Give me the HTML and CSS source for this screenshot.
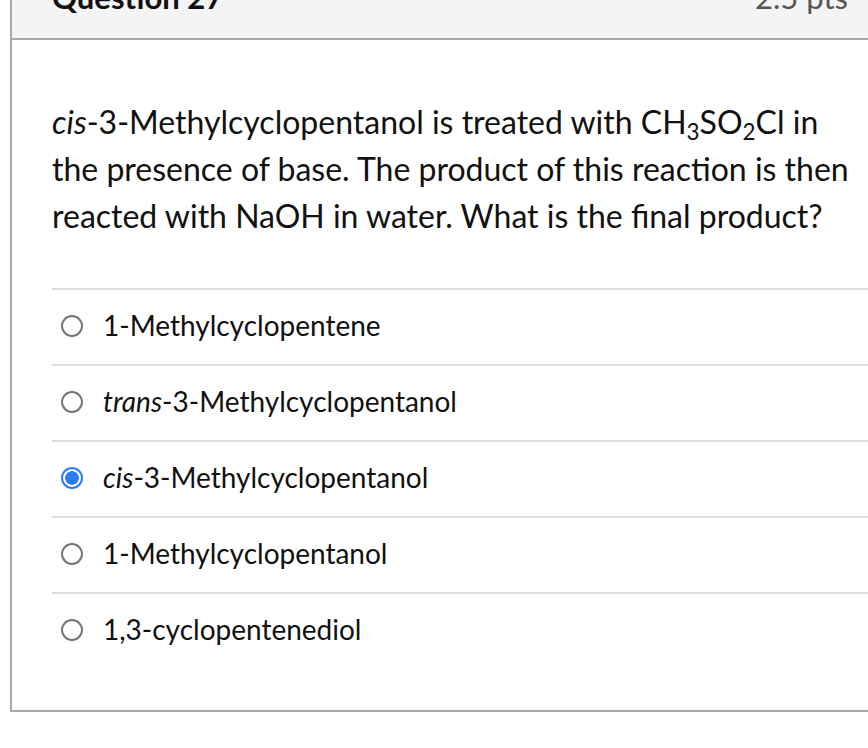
FILE: index.html
```html
<!DOCTYPE html>
<html lang="en">
<head>
<meta charset="utf-8">
<title>Question 27</title>
<link rel="stylesheet" href="styles.css">
</head>
<body>
<div class="card">
  <div class="card-header">
    <span class="q-title">Question 27</span>
    <span class="q-pts">2.5 pts</span>
  </div>
  <div class="card-body">
    <p class="q-text"><em>cis</em>-3-Methylcyclopentanol is treated with CH<sub>3</sub>SO<sub>2</sub>Cl in the presence of base. The product of this reaction is then reacted with NaOH in water. What is the final product?</p>
    <div class="answers">
      <div class="answer"><span class="radio"></span><span class="label">1-Methylcyclopentene</span></div>
      <div class="answer"><span class="radio"></span><span class="label"><em>trans</em>-3-Methylcyclopentanol</span></div>
      <div class="answer"><span class="radio checked"></span><span class="label"><em>cis</em>-3-Methylcyclopentanol</span></div>
      <div class="answer"><span class="radio"></span><span class="label">1-Methylcyclopentanol</span></div>
      <div class="answer"><span class="radio"></span><span class="label">1,3-cyclopentenediol</span></div>
    </div>
  </div>
</div>
</body>
</html>
```

FILE: styles.css
```css
html, body {
  margin: 0;
  padding: 0;
  background: #fff;
}
body {
  font-family: Lato, "Liberation Sans", sans-serif;
  color: #111;
  overflow: hidden;
}
.card {
  margin: -20px -20px 0 10px;
  border: 2px solid #a9a9a9;
  background: #fff;
}
.card-header {
  background: #f4f4f4;
  border-bottom: 2px solid #a9a9a9;
  display: flex;
  justify-content: space-between;
  align-items: flex-start;
  padding: 0 38px 0 40px;
  line-height: 1;
  box-sizing: border-box;
  height: 58px;
}
.q-title {
  font-size: 31px;
  font-weight: 700;
  color: #111;
}
.q-pts {
  font-size: 31px;
  color: #555;
}
.card-body {
  padding: 58px 18px 42px 40px;
}
.q-text {
  margin: 0 0 49px;
  font-size: 32px;
  line-height: 47px;
}
.q-text sub {
  font-size: 0.7em;
  line-height: 0;
  vertical-align: -0.25em;
}
.answers {
  display: flex;
  flex-direction: column;
}
.answer {
  display: flex;
  align-items: center;
  height: 76px;
  border-top: 2px solid #dedede;
  box-sizing: border-box;
  padding-left: 9px;
  font-size: 28px;
}
.radio {
  width: 22px;
  height: 22px;
  box-sizing: border-box;
  border: 2px solid #767676;
  border-radius: 50%;
  background: #fff;
  margin-right: 20px;
  flex: none;
  margin-top: -3px;
}
.radio.checked {
  border: 2px solid #2b7cf3;
  background: radial-gradient(circle, #2b7cf3 0 6.5px, #fff 7px);
}
.label {
  margin-top: -4px;
}
```
